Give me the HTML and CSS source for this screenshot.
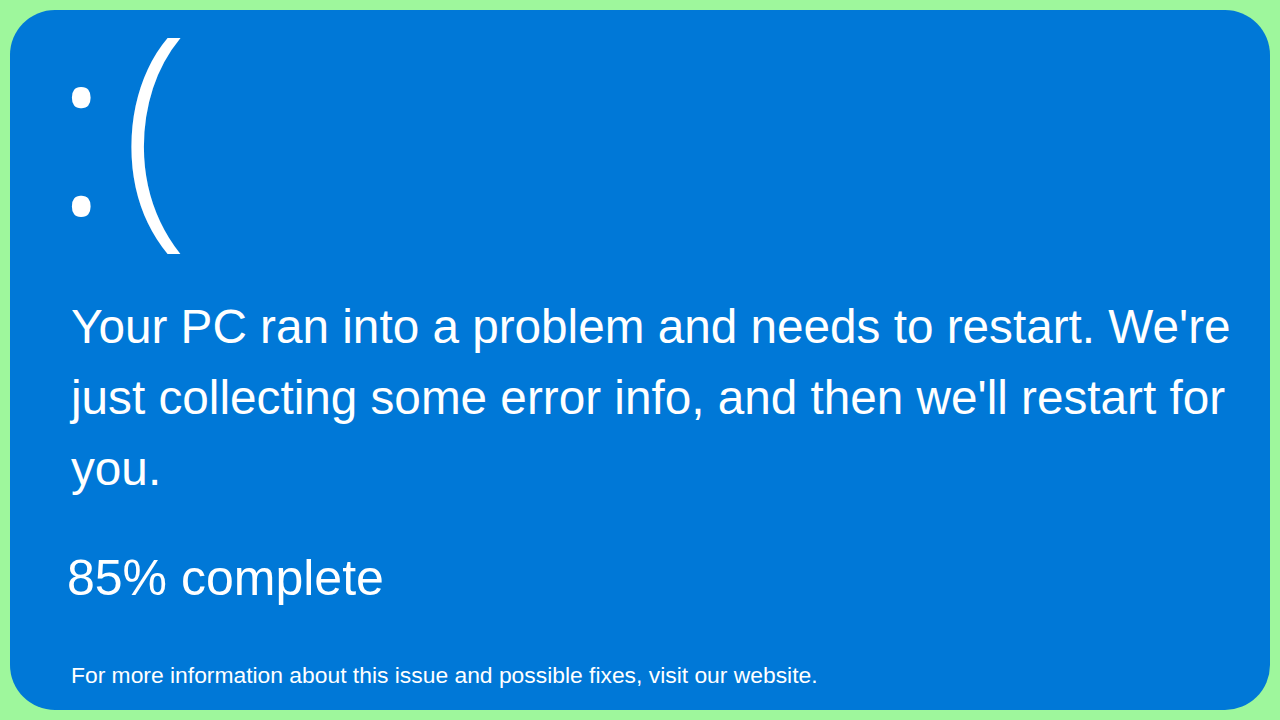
FILE: index.html
```html
<!DOCTYPE html>
<html lang="en">
<head>
    <meta charset="UTF-8">
    <meta name="viewport" content="width=device-width, initial-scale=1.0">
    <title>Your PC ran into a problem</title>
    <link rel="stylesheet" href="styles.css">
</head>
<body>
    <div class="screen">
        <div class="face"><span class="eyes">:</span>(</div>
        <p class="message">Your PC ran into a problem and needs to restart. We're just collecting some error info, and then we'll restart for you.</p>
        <p class="progress">85% complete</p>
        <p class="info">For more information about this issue and possible fixes, visit our website.</p>
    </div>
</body>
</html>
```

FILE: styles.css
```css
body {
    margin: 0;
    background-color: #9ef79c;
    font-family: 'Liberation Sans', Arial, sans-serif;
}
.screen {
    box-sizing: border-box;
    margin: 10px;
    height: 700px;
    padding: 0 30px 0 61px;
    background-color: #0078d7;
    border-radius: 45px;
    color: white;
    display: flex;
    flex-direction: column;
}
.face {
    font-family: 'Open Sans', sans-serif;
    font-weight: 300;
    font-size: 248px;
    line-height: 280px;
    height: 280px;
    margin: -31px 0 0 -18px;
}
.face .eyes {
    font-size: 236px;
    margin-right: 12px;
}
.message {
    margin: 32px 0 0 0;
    font-size: 47.7px;
    line-height: 71px;
}
.progress {
    margin: 44px 0 0 -4px;
    font-size: 50px;
    line-height: 60px;
}
.info {
    margin: auto 0 22px 0;
    font-size: 22.85px;
    line-height: 26px;
}
```
